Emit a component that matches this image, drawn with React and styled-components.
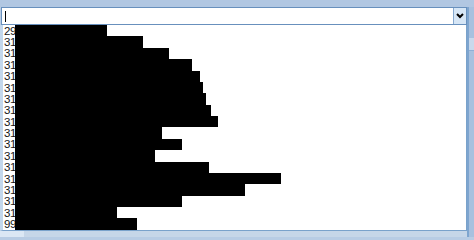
import React from "react";
import styled, { createGlobalStyle } from "styled-components";

const Global = createGlobalStyle`
  html, body { margin: 0; padding: 0; }
  body {
    width: 474px;
    height: 237px;
    overflow: hidden;
    background: #b8cce4;
    font-family: "Liberation Sans", Arial, sans-serif;
  }
`;

const Frame = styled.div`
  display: flex;
  flex-direction: column;
  width: 474px;
  height: 237px;
`;

const TopStrip = styled.div`
  height: 7px;
  flex: none;
  background: #b1c7e2;
`;

const Body = styled.div`
  display: flex;
  flex: 1;
  min-height: 0;
`;

const Main = styled.div`
  width: 467px;
  display: flex;
  flex-direction: column;
`;

const RightStrip = styled.div`
  flex: 1;
  display: flex;
  flex-direction: column;
  border-left: 2px solid #7ea5cf;
  background: #a8c1df;
`;

const StripGap = styled.div`
  height: ${(p) => p.$h}px;
  flex: none;
  background: ${(p) => p.$c};
`;

const Combo = styled.div`
  height: 16px;
  margin-left: 1px;
  display: flex;
  border: 1px solid #6890bd;
  background: #fff;
`;

const Field = styled.div`
  flex: 1;
  display: flex;
  align-items: center;
  padding-left: 3px;
`;

const Caret = styled.span`
  width: 1px;
  height: 11px;
  background: #000;
`;

const DropButton = styled.div`
  width: 12px;
  display: flex;
  align-items: center;
  justify-content: center;
  background: #d6e6f6;
  border-left: 1px solid #86a9d0;
`;

const List = styled.div`
  height: 205px;
  display: flex;
  flex-direction: column;
  background: #fff;
  border-left: 3px solid #c3d7ec;
  border-right: 1px solid #7aa2cb;
  border-bottom: 1px solid #7aa2cb;
`;

const Row = styled.div`
  position: relative;
  height: 11.39px;
  display: flex;
  align-items: center;
  flex: none;
`;

const Label = styled.span`
  padding-left: 1px;
  white-space: nowrap;
  font-size: 11.5px;
  line-height: 12px;
  color: #151515;
  letter-spacing: -0.4px;
`;

const Redaction = styled.span`
  position: absolute;
  left: 12px;
  top: 0;
  bottom: 0;
  background: #000;
`;

const BottomStrip = styled.div`
  flex: 1;
  display: flex;
`;

const BottomPart = styled.div`
  width: ${(p) => p.$w};
  flex: ${(p) => (p.$grow ? 1 : "none")};
  background: ${(p) => p.$c};
`;

const rows = [
  ["29", 107],
  ["31", 143],
  ["31", 169],
  ["31", 192],
  ["31", 200],
  ["31", 203],
  ["31", 206],
  ["31", 211],
  ["31", 218],
  ["31", 162],
  ["31", 182],
  ["31", 155],
  ["31", 209],
  ["31", 281],
  ["31", 245],
  ["31", 182],
  ["31", 117],
  ["99", 137],
];

function Chevron() {
  return (
    <svg width="8" height="6" viewBox="0 0 8 6">
      <polyline points="1,1 4,4 7,1" fill="none" stroke="#000" strokeWidth="2" />
    </svg>
  );
}

export default function App() {
  return (
    <>
      <Global />
      <Frame>
        <TopStrip />
        <Body>
          <Main>
            <Combo>
              <Field>
                <Caret />
              </Field>
              <DropButton>
                <Chevron />
              </DropButton>
            </Combo>
            <List>
              {rows.map(([label, end], i) => (
                <Row key={i}>
                  <Label>{label}</Label>
                  <Redaction style={{ width: `${end - 15}px` }} />
                </Row>
              ))}
            </List>
            <BottomStrip>
              <BottomPart $w="24px" $c="#dbe7f4" />
              <BottomPart $w="auto" $grow $c="#c6d6e8" />
            </BottomStrip>
          </Main>
          <RightStrip>
            <StripGap $h={31} $c="#a8c1df" />
            <StripGap $h={12} $c="#c9d9ec" />
            <StripGap $h={1} $c="#8fb0d6" />
            <StripGap $h={200} $c="#a8c1df" />
          </RightStrip>
        </Body>
      </Frame>
    </>
  );
}
